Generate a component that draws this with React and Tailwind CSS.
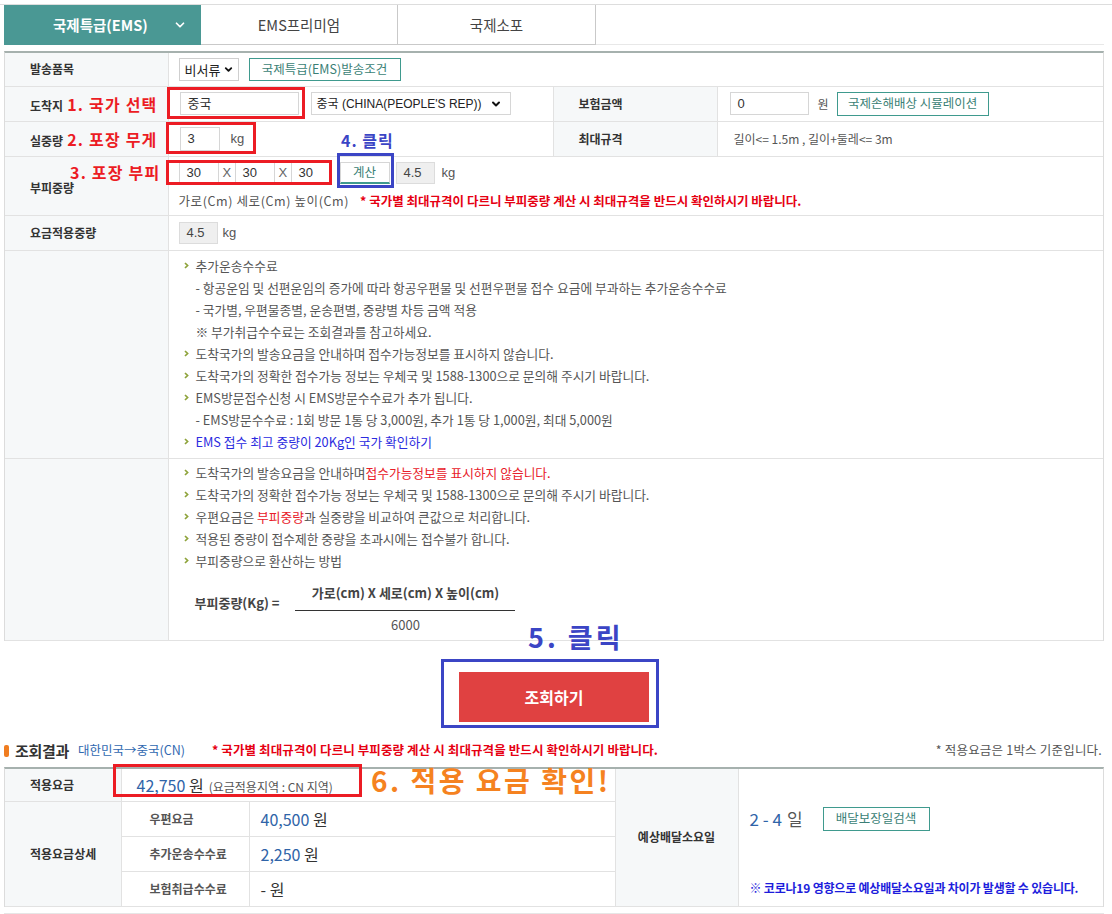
import React from 'react';
import { ChevronDown } from 'lucide-react';

const LAB = "bg-[#f6f8f9] border-b border-[#e2e2e2] text-[12px] font-bold text-[#333] align-middle";
const VAL = "border-b border-[#e2e2e2] text-[#555] align-middle";
const SANS = "font-['Liberation_Sans','Noto_Sans_CJK_KR',sans-serif]";

function Bullet() {
  return (
    <svg width="5" height="7" viewBox="0 0 5 7" className="shrink-0">
      <path d="M1 1 L3.6 3.5 L1 6" stroke="#8ea33b" strokeWidth="1.7" fill="none" />
    </svg>
  );
}

function Li({ children, bullet = true }) {
  return (
    <div className="flex items-center h-[22px] leading-[22px] whitespace-nowrap">
      <span className="w-[12px] flex items-center">{bullet ? <Bullet /> : null}</span>
      <span>{children}</span>
    </div>
  );
}

function GrayBox({ children }) {
  return (
    <div className={`h-[22px] w-[39px] border border-[#dcdcdc] bg-[#efefef] flex items-center pl-[7px] text-[13px] text-[#444] ${SANS}`}>
      {children}
    </div>
  );
}

function Input({ children, className }) {
  return (
    <div className={`h-[23px] border border-[#d6d6d6] bg-white flex items-center pl-[7px] text-[13px] text-[#333] ${SANS} ${className}`}>
      {children}
    </div>
  );
}

export default function App() {
  return (
    <div className="w-[1112px] h-[914px] overflow-hidden bg-white font-['Noto_Sans_CJK_KR',sans-serif] text-[#555]">
      {/* Tabs */}
      <div className="pt-[4px]">
        <div className="border-t border-[#dddddd]">
          <div className="ml-[4px] w-[1100px] flex h-[40px]">
            <div className="w-[197px] bg-[#4a9894] flex items-center pl-[49px] pr-[14px] text-white font-bold text-[14.5px] leading-none">
              <span>국제특급(EMS)</span>
              <ChevronDown className="ml-auto" size={14} strokeWidth={3} color="#ffffff" />
            </div>
            <div className="w-[197px] border-r border-b border-[#c9c9c9] flex items-center justify-center text-[14.5px] text-[#444]">
              EMS프리미엄
            </div>
            <div className="w-[198px] border-r border-b border-[#c9c9c9] flex items-center justify-center text-[14.5px] text-[#444]">
              국제소포
            </div>
            <div className="flex-1 border-b border-[#e8e8e8]"></div>
          </div>
        </div>
      </div>

      {/* Main form table */}
      <div className="relative ml-[4px] w-[1100px] mt-[6px] border-t-2 border-t-[#a6b1ae] border-x border-x-[#dcdcdc]">
        <table className="w-full table-fixed border-collapse">
          <colgroup>
            <col className="w-[163px]" />
            <col className="w-[385px]" />
            <col className="w-[164px]" />
            <col />
          </colgroup>
          <tbody>
            <tr>
              <td className={`${LAB} h-[33px] pl-[25px] border-r`}>발송품목</td>
              <td colSpan={3} className={`${VAL} pl-[10px]`}>
                <div className="flex items-center gap-[10px]">
                  <div className="h-[23px] w-[60px] border border-[#cfcfcf] flex items-center justify-between pl-[5px] pr-[4px] text-[13px] text-[#222] leading-none">
                    비서류
                    <ChevronDown size={11} strokeWidth={4} color="#111" />
                  </div>
                  <div className="h-[23px] w-[152px] border border-[#3f9a8e] flex items-center justify-center text-[12.5px] text-[#3b7f76] leading-none">
                    국제특급(EMS)발송조건
                  </div>
                </div>
              </td>
            </tr>
            <tr>
              <td className={`${LAB} h-[35px] pl-[25px] border-r whitespace-nowrap`}>
                도착지
                <span className="ml-[4px] text-[16px] text-[#ec1c24] tracking-[1.2px]">1. 국가 선택</span>
              </td>
              <td className={`${VAL} pl-[11px] border-r`}>
                <div className="flex items-center gap-[12px]">
                  <Input className="w-[119px]">중국</Input>
                  <div className={`h-[23px] w-[200px] border border-[#d6d6d6] flex items-center justify-between pl-[5px] pr-[8px] text-[12px] text-[#222] ${SANS} leading-none`}>
                    <span className="whitespace-nowrap">중국 (CHINA(PEOPLE'S REP))</span>
                    <ChevronDown size={12} strokeWidth={4} color="#111" />
                  </div>
                </div>
              </td>
              <td className={`${LAB} pl-[25px] border-r`}>보험금액</td>
              <td className={`${VAL} pl-[12px]`}>
                <div className="flex items-center">
                  <Input className="w-[79px]">0</Input>
                  <span className="ml-[9px] text-[12px] text-[#555]">원</span>
                  <div className="ml-[8px] h-[24px] w-[152px] border border-[#3f9a8e] flex items-center justify-center text-[12.5px] text-[#3b7f76] leading-none">
                    국제손해배상 시뮬레이션
                  </div>
                </div>
              </td>
            </tr>
            <tr>
              <td className={`${LAB} h-[35px] pl-[25px] border-r whitespace-nowrap`}>
                실중량
                <span className="ml-[4px] text-[16px] text-[#ec1c24] tracking-[1.2px]">2. 포장 무게</span>
              </td>
              <td className={`${VAL} pl-[11px] border-r`}>
                <div className="flex items-center">
                  <Input className="w-[40px] h-[24px]">3</Input>
                  <span className={`ml-[11px] text-[13px] text-[#555] ${SANS}`}>kg</span>
                </div>
              </td>
              <td className={`${LAB} pl-[25px] border-r`}>최대규격</td>
              <td className={`${VAL} pl-[12px]`}>
                <div className="flex items-center">
                  <span className="w-[4px] shrink-0"></span>
                  <span className="text-[12px] text-[#555] whitespace-nowrap">길이&lt;= 1.5m , 길이+둘레&lt;= 3m</span>
                </div>
              </td>
            </tr>
            <tr>
              <td className={`${LAB} h-[59px] pl-[25px] border-r pt-[4px]`}>부피중량</td>
              <td colSpan={3} className={`${VAL} pl-[10px]`}>
                <div className="flex items-center gap-[4px]">
                  <Input className="w-[40px]">30</Input>
                  <span className={`w-[8px] text-center text-[13px] text-[#666] ${SANS}`}>X</span>
                  <Input className="w-[40px]">30</Input>
                  <span className={`w-[8px] text-center text-[13px] text-[#666] ${SANS}`}>X</span>
                  <Input className="w-[40px]">30</Input>
                  <div className="ml-[5px] h-[22px] w-[50px] border border-[#d6d6d6] border-b-2 border-b-[#3f9a8e] flex items-center justify-center text-[12.5px] text-[#3b7f76] leading-none">
                    계산
                  </div>
                  <div className="ml-[2px]"><GrayBox>4.5</GrayBox></div>
                  <span className={`ml-[3px] text-[13px] text-[#555] ${SANS}`}>kg</span>
                </div>
                <div className="mt-[7px] flex items-center h-[18px] leading-[18px] whitespace-nowrap">
                  <span className="text-[12.5px] text-[#555] tracking-[0.6px]">가로(Cm) 세로(Cm) 높이(Cm)</span>
                  <span className="ml-[11px] text-[12.5px] font-bold text-[#e60012]">* 국가별 최대규격이 다르니 부피중량 계산 시 최대규격을 반드시 확인하시기 바랍니다.</span>
                </div>
              </td>
            </tr>
            <tr>
              <td className={`${LAB} h-[35px] pl-[25px] border-r`}>요금적용중량</td>
              <td colSpan={3} className={`${VAL} pl-[10px]`}>
                <div className="flex items-center">
                  <GrayBox>4.5</GrayBox>
                  <span className={`ml-[5px] text-[13px] text-[#555] ${SANS}`}>kg</span>
                </div>
              </td>
            </tr>
            <tr>
              <td className={`${LAB} h-[208px] border-r`}></td>
              <td colSpan={3} className={`${VAL} align-top pl-[15px] pt-[4px] text-[12.75px] text-[#4c4c4c]`}>
                <Li>추가운송수수료</Li>
                <Li bullet={false}>- 항공운임 및 선편운임의 증가에 따라 항공우편물 및 선편우편물 접수 요금에 부과하는 추가운송수수료</Li>
                <Li bullet={false}>- 국가별, 우편물종별, 운송편별, 중량별 차등 금액 적용</Li>
                <Li bullet={false}>※ 부가취급수수료는 조회결과를 참고하세요.</Li>
                <Li>도착국가의 발송요금을 안내하며 접수가능정보를 표시하지 않습니다.</Li>
                <Li>도착국가의 정확한 접수가능 정보는 우체국 및 1588-1300으로 문의해 주시기 바랍니다.</Li>
                <Li>EMS방문접수신청 시 EMS방문수수료가 추가 됩니다.</Li>
                <Li bullet={false}>- EMS방문수수료 : 1회 방문 1통 당 3,000원, 추가 1통 당 1,000원, 최대 5,000원</Li>
                <Li><span className="text-[#2b2be0]">EMS 접수 최고 중량이 20Kg인 국가 확인하기</span></Li>
              </td>
            </tr>
            <tr>
              <td className={`${LAB} h-[182px] border-r`}></td>
              <td colSpan={3} className={`${VAL} align-top pl-[15px] pt-[3px] text-[12.75px] text-[#4c4c4c]`}>
                <Li>도착국가의 발송요금을 안내하며<span className="text-[#e8202a]">접수가능정보를 표시하지 않습니다.</span></Li>
                <Li>도착국가의 정확한 접수가능 정보는 우체국 및 1588-1300으로 문의해 주시기 바랍니다.</Li>
                <Li>우편요금은 <span className="text-[#e8202a]">부피중량</span>과 실중량을 비교하여 큰값으로 처리합니다.</Li>
                <Li>적용된 중량이 접수제한 중량을 초과시에는 접수불가 합니다.</Li>
                <Li>부피중량으로 환산하는 방법</Li>
                <div className="flex items-start mt-[12px] ml-[11px]">
                  <div className="mt-[10px] h-[18px] leading-[18px] text-[13px] font-bold text-[#444] whitespace-nowrap">부피중량(Kg) =</div>
                  <div className="ml-[16px] w-[220px] flex flex-col items-center">
                    <div className="w-full text-center h-[27px] leading-[18px] border-b border-[#333] text-[13px] font-bold text-[#444] whitespace-nowrap">가로(cm) X 세로(cm) X 높이(cm)</div>
                    <div className="pt-[5px] leading-[18px] text-[13px] text-[#555]">6000</div>
                  </div>
                </div>
              </td>
            </tr>
          </tbody>
        </table>

        {/* annotations */}
        <div className="absolute left-[162px] top-[34px] w-[138px] h-[32px] border-[3px] border-[#ec1c24] pointer-events-none"></div>
        <div className="absolute left-[161px] top-[69px] w-[90px] h-[32px] border-[3px] border-[#ec1c24] pointer-events-none"></div>
        <div className="absolute left-[336px] top-[77px] h-[20px] leading-[20px] text-[16px] font-bold text-[#3b45c5] tracking-[1px] whitespace-nowrap">4. 클릭</div>
        <div className="absolute left-[65px] top-[109px] h-[20px] leading-[20px] text-[16px] font-bold text-[#ec1c24] tracking-[1.2px] whitespace-nowrap">3. 포장 부피</div>
        <div className="absolute left-[161px] top-[107px] w-[166px] h-[25px] border-[3px] border-[#ec1c24] pointer-events-none"></div>
        <div className="absolute left-[332px] top-[100px] w-[57px] h-[35px] border-[3px] border-[#3b45c5] pointer-events-none"></div>
      </div>

      {/* Search button */}
      <div className="relative ml-[4px] w-[1100px] h-[100px] pt-[31px] flex justify-center items-start">
        <div className="absolute left-[524px] top-[-21px] h-[34px] leading-[34px] text-[27px] font-bold text-[#3b45c5] tracking-[3px] whitespace-nowrap">5. 클릭</div>
        <div className="w-[190px] h-[50px] bg-[#e04141] flex items-center justify-center text-white text-[16px] font-bold leading-none">
          조회하기
        </div>
        <div className="absolute left-[437px] top-[18px] w-[218px] h-[69px] border-[3px] border-[#3b45c5] pointer-events-none"></div>
      </div>

      {/* Result header */}
      <div className="ml-[4px] w-[1100px] h-[20px] flex items-center whitespace-nowrap">
        <div className="w-[5px] h-[12px] bg-[#f07d20] rounded-[2px]"></div>
        <span className="ml-[6px] text-[15px] font-bold text-[#333] tracking-[-0.3px] leading-none">조회결과</span>
        <span className="ml-[9px] text-[12.5px] text-[#3068b0] leading-none">대한민국→중국(CN)</span>
        <span className="ml-[27px] text-[12.5px] font-bold text-[#e60012] tracking-[0.1px] leading-none">* 국가별 최대규격이 다르니 부피중량 계산 시 최대규격을 반드시 확인하시기 바랍니다.</span>
        <span className="ml-auto mr-[2px] text-[12.5px] text-[#555] tracking-[0.2px] leading-none">* 적용요금은 1박스 기준입니다.</span>
      </div>

      {/* Result table */}
      <div className="relative ml-[4px] w-[1100px] mt-[6px] border-t-2 border-t-[#a6b1ae] border-x border-x-[#dcdcdc]">
        <table className="w-full table-fixed border-collapse">
          <colgroup>
            <col className="w-[116px]" />
            <col className="w-[128px]" />
            <col className="w-[366px]" />
            <col className="w-[123px]" />
            <col />
          </colgroup>
          <tbody>
            <tr>
              <td className={`${LAB} h-[33px] pl-[25px] border-r`}>적용요금</td>
              <td colSpan={2} className={`${VAL} pl-[15px] border-r whitespace-nowrap`}>
                <span className="text-[16px] text-[#2f64a8]">42,750</span>
                <span className="text-[16px] text-[#333]"> 원</span>
                <span className="ml-[5px] text-[12px] text-[#555]">(요금적용지역 : CN 지역)</span>
              </td>
              <td rowSpan={4} className={`${LAB} text-center border-r`}>예상배달소요일</td>
              <td rowSpan={4} className={`${VAL} align-top pl-[11px] pt-[38px]`}>
                <div className="flex items-center h-[24px]">
                  <span className="text-[17px] text-[#2f64a8] leading-none">2 - 4</span>
                  <span className="ml-[5px] text-[17px] text-[#555] leading-none">일</span>
                  <div className="ml-[20px] h-[24px] w-[107px] border border-[#3f9a8e] flex items-center justify-center text-[12.5px] text-[#3b7f76] leading-none">
                    배달보장일검색
                  </div>
                </div>
                <div className="mt-[48px] h-[18px] leading-[18px] text-[12px] font-bold text-[#1d1ddc] tracking-[-0.2px] whitespace-nowrap">
                  ※ 코로나19 영향으로 예상배달소요일과 차이가 발생할 수 있습니다.
                </div>
              </td>
            </tr>
            <tr>
              <td rowSpan={3} className={`${LAB} pl-[25px] border-r`}>적용요금상세</td>
              <td className={`${VAL} h-[35px] pl-[28px] border-r text-[12px] font-bold text-[#333]`}>우편요금</td>
              <td className={`${VAL} pl-[11px] border-r whitespace-nowrap`}>
                <span className="text-[16px] text-[#2f64a8]">40,500</span>
                <span className="text-[16px] text-[#333]"> 원</span>
              </td>
            </tr>
            <tr>
              <td className={`${VAL} h-[35px] pl-[28px] border-r text-[12px] font-bold text-[#333]`}>추가운송수수료</td>
              <td className={`${VAL} pl-[11px] border-r whitespace-nowrap`}>
                <span className="text-[16px] text-[#2f64a8]">2,250</span>
                <span className="text-[16px] text-[#333]"> 원</span>
              </td>
            </tr>
            <tr>
              <td className={`${VAL} h-[35px] pl-[28px] border-r text-[12px] font-bold text-[#333]`}>보험취급수수료</td>
              <td className={`${VAL} pl-[11px] border-r whitespace-nowrap`}>
                <span className="text-[16px] text-[#333]">- 원</span>
              </td>
            </tr>
          </tbody>
        </table>
        <div className="absolute left-[108px] top-[-5px] w-[249px] h-[33px] border-[3px] border-[#ec1c24] pointer-events-none"></div>
        <div className="absolute left-[366px] top-[-5px] h-[32px] leading-[32px] text-[28px] font-bold text-[#f58220] tracking-[2.5px] whitespace-nowrap">6. 적용 요금 확인!</div>
      </div>
      <div className="ml-[4px] w-[1100px] mt-[6px] border-t border-x border-[#e6e6e6] h-[4px]"></div>
    </div>
  );
}
